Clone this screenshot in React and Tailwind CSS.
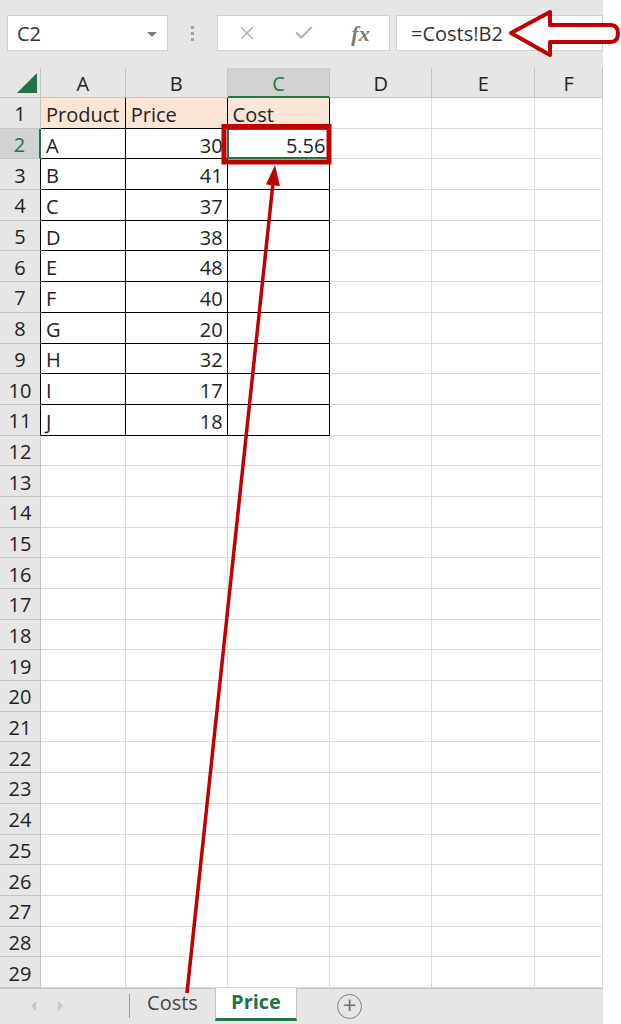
import { X, Check } from 'lucide-react'

const cols = [
  { key: 'A', w: 'w-[85px]' },
  { key: 'B', w: 'w-[102px]' },
  { key: 'C', w: 'w-[103px]' },
  { key: 'D', w: 'w-[102px]' },
  { key: 'E', w: 'w-[103px]' },
  { key: 'F', w: 'w-[68px]' },
]

const data = [
  ['Product', 'Price', 'Cost'],
  ['A', '30', '5.56'],
  ['B', '41', ''],
  ['C', '37', ''],
  ['D', '38', ''],
  ['E', '48', ''],
  ['F', '40', ''],
  ['G', '20', ''],
  ['H', '32', ''],
  ['I', '17', ''],
  ['J', '18', ''],
]

const rows = Array.from({ length: 29 }, (_, i) => i + 1)

const font = { fontFamily: '"Open Sans", "Liberation Sans", sans-serif' }

function TopBar() {
  return (
    <div className="h-[68px] bg-[#e6e6e6] flex items-start pt-[15px] pl-[7px]">
      {/* name box */}
      <div className="w-[161px] h-[36px] bg-white border border-[#d0d0d0] flex items-center justify-between pl-[9px] pr-[10px] pt-[2px]">
        <span className="text-[20px] text-[#333]">C2</span>
        <span className="w-0 h-0 border-l-[5px] border-r-[5px] border-t-[5px] border-l-transparent border-r-transparent border-t-[#7a7a7a]" />
      </div>
      {/* dots */}
      <div className="w-[49px] h-[36px] flex flex-col items-center justify-center gap-[3px]">
        <span className="w-[3px] h-[3px] bg-[#a0a0a0]" />
        <span className="w-[3px] h-[3px] bg-[#a0a0a0]" />
        <span className="w-[3px] h-[3px] bg-[#a0a0a0]" />
      </div>
      {/* formula buttons */}
      <div className="w-[173px] h-[36px] bg-white border border-[#d0d0d0] flex items-center">
        <div className="w-[57px] flex justify-center">
          <X className="w-[22px] h-[22px] text-[#b0b0b0]" strokeWidth={1.6} />
        </div>
        <div className="w-[57px] flex justify-center">
          <Check className="w-[22px] h-[22px] text-[#b0b0b0]" strokeWidth={2.2} />
        </div>
        <div className="w-[57px] flex justify-center">
          <span className="italic text-[22px] text-[#7a7a7a] font-bold" style={{ fontFamily: '"Liberation Serif", serif' }}>
            fx
          </span>
        </div>
      </div>
      {/* formula bar */}
      <div className="ml-[6px] flex-1 h-[36px] bg-white border border-[#d0d0d0] flex items-center pl-[14px] pt-[2px]">
        <span className="text-[20px] text-[#333]">=Costs!B2</span>
      </div>
    </div>
  )
}

function HeaderRow() {
  return (
    <div className="h-[30px] flex bg-[#e6e6e6]">
      <div className="w-[41px] border-r border-b border-[#c4c4c4] relative">
        <svg className="absolute left-0 top-0" width="41" height="30" viewBox="0 0 41 30">
          <polygon points="17,25 37,25 37,5" fill="#217346" />
        </svg>
      </div>
      {cols.map((c) => (
        <div
          key={c.key}
          className={`${c.w} flex items-center justify-center pt-[3px] text-[20px] border-r ${
            c.key === 'C'
              ? 'bg-[#d2d2d2] text-[#217346] border-b-2 border-b-[#217346] border-r-[#c4c4c4]'
              : 'text-[#222] border-b border-[#c4c4c4]'
          }`}
        >
          {c.key}
        </div>
      ))}
    </div>
  )
}

function Row({ n }) {
  const inTable = n <= 11
  const values = inTable ? data[n - 1] : null
  return (
    <div className="h-[30.69px] flex">
      <div
        className={`w-[41px] flex items-center justify-center pt-[3px] text-[20px] border-b border-[#c4c4c4] border-r ${
          n === 2
            ? 'bg-[#d2d2d2] text-[#217346] border-r-2 border-r-[#217346]'
            : inTable && n > 2
            ? 'bg-[#e6e6e6] text-[#222] border-r-black'
            : 'bg-[#e6e6e6] text-[#222]'
        }`}
      >
        {n}
      </div>
      {cols.map((c, ci) => {
        const tableCell = inTable && ci < 3
        const val = tableCell ? values[ci] : ''
        const right = n > 1 && ci > 0
        const cls = tableCell ? 'border-r border-b border-black' : 'border-r border-b border-[#dadada]'
        const head = n === 1 && ci < 3
        const selected = n === 2 && ci === 2
        return (
          <div
            key={c.key}
            className={`${c.w} relative flex items-center pt-[4px] text-[20px] text-[#222] ${cls} ${
              head ? 'bg-[#fce4d6]' : 'bg-white'
            } ${right ? 'justify-end pr-[4px]' : 'justify-start pl-[5px]'}`}
          >
            {selected && (
              <>
                <span className="absolute inset-[-1px] border-2 border-[#217346]" />
                <span className="absolute right-[-3px] bottom-[-3px] w-[5px] h-[5px] bg-[#217346] border border-white" />
              </>
            )}
            <span className="relative">{val}</span>
          </div>
        )
      })}
    </div>
  )
}

function TabBar() {
  return (
    <div className="h-[36px] bg-[#e6e6e6] border-t border-[#c4c4c4] flex items-start">
      <div className="w-[130px] h-full flex items-center">
        <span className="ml-[31px] w-0 h-0 border-t-[5px] border-b-[5px] border-r-[5px] border-t-transparent border-b-transparent border-r-[#c8c8c8]" />
        <span className="ml-[22px] w-0 h-0 border-t-[5px] border-b-[5px] border-l-[5px] border-t-transparent border-b-transparent border-l-[#c8c8c8]" />
        <span className="ml-auto w-px h-[24px] bg-[#9a9a9a]" />
      </div>
      <div className="w-[85px] h-full flex items-center justify-center pb-[6px]">
        <span className="text-[20px] text-[#444]">Costs</span>
      </div>
      <div className="w-[82px] h-[33px] -mt-px bg-white border-l border-r border-[#c4c4c4] border-b-[3px] border-b-[#217346] flex items-center justify-center pb-[2px]">
        <span className="text-[20px] font-bold text-[#217346]">Price</span>
      </div>
      <div className="ml-[40px] h-full flex items-center">
        <span className="w-[25px] h-[25px] rounded-full border-[1.5px] border-[#7f7f7f] flex items-center justify-center text-[#6f6f6f] text-[24px] leading-none pb-[2px]">
          +
        </span>
      </div>
    </div>
  )
}

function Annotations() {
  return (
    <svg className="absolute inset-0 pointer-events-none" width="621" height="1024" viewBox="0 0 621 1024">
      {/* formula arrow */}
      <path
        d="M511,33 L550,12 L550,25 L611,25 Q618,25 618,33.5 Q618,42 611,42 L550,42 L550,55 Z"
        fill="white"
        stroke="#c00000"
        strokeWidth="4"
        strokeLinejoin="round"
      />
      {/* selected cell box */}
      <rect x="224" y="126.5" width="105" height="35.5" fill="none" stroke="#c00000" strokeWidth="5" />
      {/* pointer line */}
      <line x1="187" y1="993" x2="273" y2="183" stroke="#c00000" strokeWidth="3.5" />
      <polygon points="275,165 280,186 266,184.5" fill="#c00000" />
    </svg>
  )
}

export default function App() {
  return (
    <div className="relative w-[621px] h-[1024px] bg-white overflow-hidden" style={font}>
      <div className="w-[603px] flex flex-col">
        <TopBar />
        <HeaderRow />
        {rows.map((n) => (
          <Row key={n} n={n} />
        ))}
        <TabBar />
      </div>
      <Annotations />
    </div>
  )
}
